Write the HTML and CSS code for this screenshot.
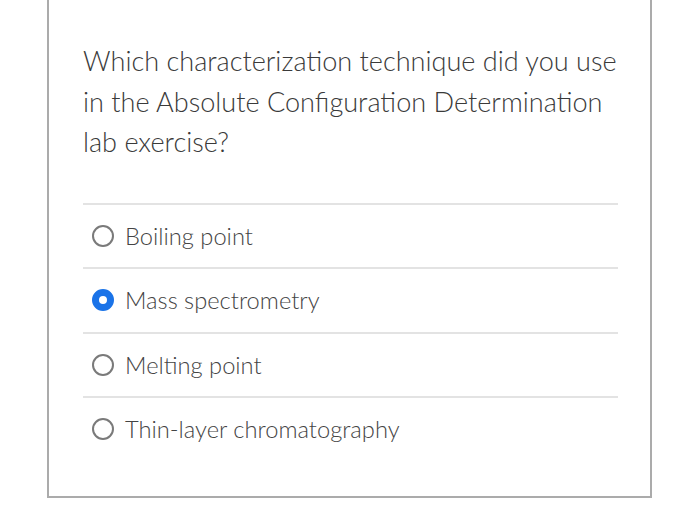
FILE: index.html
```html
<!DOCTYPE html>
<html>
<head>
<meta charset="utf-8">
<link rel="stylesheet" href="styles.css">
</head>
<body>
<div class="card">
  <p class="question">Which characterization technique did you use in the Absolute Configuration Determination lab exercise?</p>
  <ul class="options">
    <li class="option"><span class="radio"></span><span class="label">Boiling point</span></li>
    <li class="option"><span class="radio checked"></span><span class="label">Mass spectrometry</span></li>
    <li class="option"><span class="radio"></span><span class="label">Melting point</span></li>
    <li class="option"><span class="radio"></span><span class="label">Thin-layer chromatography</span></li>
  </ul>
</div>
</body>
</html>
```

FILE: styles.css
```css
html, body {
  margin: 0;
  padding: 0;
  background: #ffffff;
}
body {
  font-family: Lato, "Liberation Sans", sans-serif;
  font-weight: 300;
  color: #3f3f3f;
}
.card {
  margin: -10px 0 0 47px;
  width: 605px;
  border: 2px solid #ababab;
  padding: 49px 32px 35px 34px;
  box-sizing: border-box;
}
.question {
  margin: 0 0 40px 0;
  font-size: 27.1px;
  line-height: 40.5px;
  color: #3a3a3a;
}
.options {
  list-style: none;
  margin: 0;
  padding: 0;
}
.option {
  display: flex;
  align-items: center;
  gap: 11px;
  height: 62.5px;
  border-top: 2px solid #e3e3e3;
  font-size: 23.7px;
  color: #444444;
}
.radio {
  width: 18px;
  height: 18px;
  border: 2px solid #7a7a7a;
  border-radius: 50%;
  margin-left: 9px;
  flex: none;
  box-sizing: content-box;
}
.radio.checked {
  width: 8px;
  height: 8px;
  border: 7px solid #1a73e8;
  background: #ffffff;
}
```
